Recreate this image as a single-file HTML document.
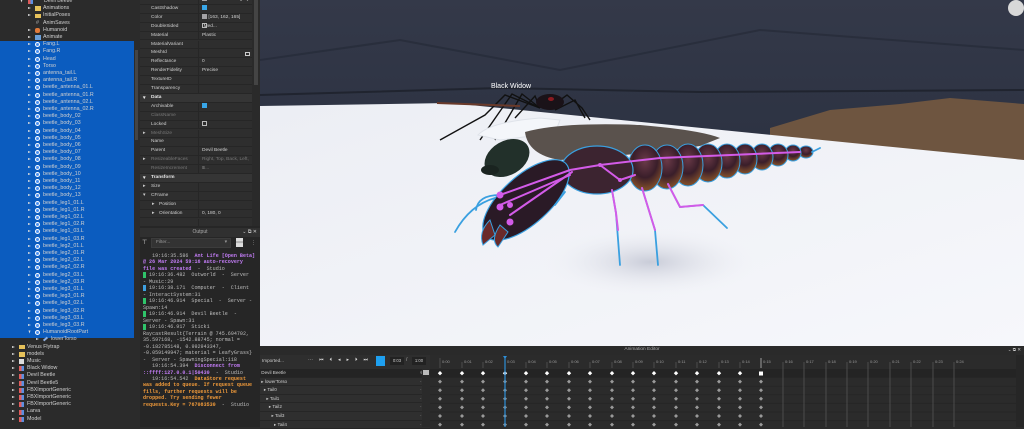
<!DOCTYPE html>
<html><head><meta charset="utf-8"><style>
*{margin:0;padding:0;box-sizing:border-box}
body{width:1024px;height:427px;overflow:hidden;background:#2b2b2b;font-family:"Liberation Sans",sans-serif;position:relative}
.abs{position:absolute}
#exp{left:0;top:0;width:140px;height:427px;background:#2b2b2b}
.r{position:absolute;height:7.2px;line-height:7.2px;font-size:5.3px;color:#d0d0d0;white-space:nowrap}
.r .a{position:absolute;top:2px;width:0;height:0;border-left:3px solid #ddd;border-top:1.6px solid transparent;border-bottom:1.6px solid transparent}
.r .i{position:absolute;top:1px;width:5px;height:5px;border-radius:50%;border:1px solid #fff;background:#4a8ff0}
.r .f{position:absolute;top:1.2px;width:6px;height:4.6px;background:#e6c15a}
.r .m{position:absolute;top:1.2px;width:5px;height:5px;background:linear-gradient(90deg,#e05c5c 50%,#5c8fe0 50%)}
#sel{left:0;top:41px;width:134px;height:297px;background:#0b5cbf}
#props{left:140px;top:0;width:120px;height:226px;background:#2e2e2e}
.p{position:absolute;left:0;width:112px;height:8.9px;border-bottom:1px solid #262626;font-size:4.8px;line-height:8.9px;color:#cfcfcf}
.p .l{position:absolute;left:11px}
.p .v{position:absolute;left:58px;border-left:1px solid #262626;padding-left:3px;height:8.9px}
.p.d{color:#777}
.p.h{background:#353535;font-weight:bold;color:#e8e8e8}
.cb{display:inline-block;width:5px;height:5px;background:#38a6e8;vertical-align:middle}
.cbx{display:inline-block;width:5px;height:5px;border:1px solid #bbb;vertical-align:middle}
#out{left:140px;top:226px;width:120px;height:201px;background:#262626;overflow:hidden}
#outtxt{position:absolute;left:3px;top:27px;width:116px;font-family:"Liberation Mono",monospace;font-size:5.05px;line-height:6.45px;color:#bdbdbd;white-space:pre}
.pu{color:#c27cf5;font-weight:bold}.or{color:#f09a3a;font-weight:bold}
.g{display:inline-block;width:3px;height:5.5px;background:#2fc46a;vertical-align:middle}
.b{display:inline-block;width:3px;height:5.5px;background:#3ea0e0;vertical-align:middle}
#anim{left:260px;top:346px;width:764px;height:81px;background:#2a2a2a}
.ar{position:absolute;left:0;width:170px;height:8.6px;font-size:4.6px;line-height:8.6px;color:#cfcfcf;border-bottom:1px solid #262626;background:#2f2f2f}
</style></head><body>

<div id="exp" class="abs">
<div id="sel" class="abs"></div>
<div class="abs" style="left:134px;top:0;width:6px;height:427px;background:#2b2b2b"></div>
<div class="abs" style="left:135px;top:50px;width:3px;height:90px;background:#444"></div>

<div class="r" style="top:-2px;left:20px"><span class="a" style="transform:rotate(90deg)"></span><span class="m" style="left:8px"></span><span style="position:absolute;left:24px">Devil Beetle</span></div>
<div class="r" style="top:5.2px;left:28px"><span class="a"></span><span class="f" style="left:7px"></span><span style="position:absolute;left:15px">Animations</span></div>
<div class="r" style="top:12.4px;left:28px"><span class="a"></span><span class="f" style="left:7px"></span><span style="position:absolute;left:15px">InitialPoses</span></div>
<div class="r" style="top:19.6px;left:28px"><span style="position:absolute;left:8px;color:#aaa">#</span><span style="position:absolute;left:15px">AnimSaves</span></div>
<div class="r" style="top:26.8px;left:28px"><span class="a"></span><span class="f" style="left:7px;background:#e07a3a;border-radius:2px;width:5px"></span><span style="position:absolute;left:15px">Humanoid</span></div>
<div class="r" style="top:34px;left:28px"><span class="a"></span><span class="f" style="left:7px;background:#6a9ed8"></span><span style="position:absolute;left:15px">Animate</span></div>
<div class="r" style="top:41.2px;left:28px"><span class="a"></span><span class="i" style="left:7px"></span><span style="position:absolute;left:15px">Fang.L</span></div>
<div class="r" style="top:48.4px;left:28px"><span class="a"></span><span class="i" style="left:7px"></span><span style="position:absolute;left:15px">Fang.R</span></div>
<div class="r" style="top:55.6px;left:28px"><span class="a"></span><span class="i" style="left:7px"></span><span style="position:absolute;left:15px">Head</span></div>
<div class="r" style="top:62.8px;left:28px"><span class="a"></span><span class="i" style="left:7px"></span><span style="position:absolute;left:15px">Torso</span></div>
<div class="r" style="top:70px;left:28px"><span class="a"></span><span class="i" style="left:7px"></span><span style="position:absolute;left:15px">antenna_tail.L</span></div>
<div class="r" style="top:77.2px;left:28px"><span class="a"></span><span class="i" style="left:7px"></span><span style="position:absolute;left:15px">antenna_tail.R</span></div>
<div class="r" style="top:84.4px;left:28px"><span class="a"></span><span class="i" style="left:7px"></span><span style="position:absolute;left:15px">beetle_antenna_01.L</span></div>
<div class="r" style="top:91.6px;left:28px"><span class="a"></span><span class="i" style="left:7px"></span><span style="position:absolute;left:15px">beetle_antenna_01.R</span></div>
<div class="r" style="top:98.8px;left:28px"><span class="a"></span><span class="i" style="left:7px"></span><span style="position:absolute;left:15px">beetle_antenna_02.L</span></div>
<div class="r" style="top:106px;left:28px"><span class="a"></span><span class="i" style="left:7px"></span><span style="position:absolute;left:15px">beetle_antenna_02.R</span></div>
<div class="r" style="top:113.2px;left:28px"><span class="a"></span><span class="i" style="left:7px"></span><span style="position:absolute;left:15px">beetle_body_02</span></div>
<div class="r" style="top:120.4px;left:28px"><span class="a"></span><span class="i" style="left:7px"></span><span style="position:absolute;left:15px">beetle_body_03</span></div>
<div class="r" style="top:127.6px;left:28px"><span class="a"></span><span class="i" style="left:7px"></span><span style="position:absolute;left:15px">beetle_body_04</span></div>
<div class="r" style="top:134.8px;left:28px"><span class="a"></span><span class="i" style="left:7px"></span><span style="position:absolute;left:15px">beetle_body_05</span></div>
<div class="r" style="top:142px;left:28px"><span class="a"></span><span class="i" style="left:7px"></span><span style="position:absolute;left:15px">beetle_body_06</span></div>
<div class="r" style="top:149.2px;left:28px"><span class="a"></span><span class="i" style="left:7px"></span><span style="position:absolute;left:15px">beetle_body_07</span></div>
<div class="r" style="top:156.4px;left:28px"><span class="a"></span><span class="i" style="left:7px"></span><span style="position:absolute;left:15px">beetle_body_08</span></div>
<div class="r" style="top:163.6px;left:28px"><span class="a"></span><span class="i" style="left:7px"></span><span style="position:absolute;left:15px">beetle_body_09</span></div>
<div class="r" style="top:170.8px;left:28px"><span class="a"></span><span class="i" style="left:7px"></span><span style="position:absolute;left:15px">beetle_body_10</span></div>
<div class="r" style="top:178px;left:28px"><span class="a"></span><span class="i" style="left:7px"></span><span style="position:absolute;left:15px">beetle_body_11</span></div>
<div class="r" style="top:185.2px;left:28px"><span class="a"></span><span class="i" style="left:7px"></span><span style="position:absolute;left:15px">beetle_body_12</span></div>
<div class="r" style="top:192.4px;left:28px"><span class="a"></span><span class="i" style="left:7px"></span><span style="position:absolute;left:15px">beetle_body_13</span></div>
<div class="r" style="top:199.6px;left:28px"><span class="a"></span><span class="i" style="left:7px"></span><span style="position:absolute;left:15px">beetle_leg1_01.L</span></div>
<div class="r" style="top:206.8px;left:28px"><span class="a"></span><span class="i" style="left:7px"></span><span style="position:absolute;left:15px">beetle_leg1_01.R</span></div>
<div class="r" style="top:214px;left:28px"><span class="a"></span><span class="i" style="left:7px"></span><span style="position:absolute;left:15px">beetle_leg1_02.L</span></div>
<div class="r" style="top:221.2px;left:28px"><span class="a"></span><span class="i" style="left:7px"></span><span style="position:absolute;left:15px">beetle_leg1_02.R</span></div>
<div class="r" style="top:228.4px;left:28px"><span class="a"></span><span class="i" style="left:7px"></span><span style="position:absolute;left:15px">beetle_leg1_03.L</span></div>
<div class="r" style="top:235.6px;left:28px"><span class="a"></span><span class="i" style="left:7px"></span><span style="position:absolute;left:15px">beetle_leg1_03.R</span></div>
<div class="r" style="top:242.8px;left:28px"><span class="a"></span><span class="i" style="left:7px"></span><span style="position:absolute;left:15px">beetle_leg2_01.L</span></div>
<div class="r" style="top:250px;left:28px"><span class="a"></span><span class="i" style="left:7px"></span><span style="position:absolute;left:15px">beetle_leg2_01.R</span></div>
<div class="r" style="top:257.2px;left:28px"><span class="a"></span><span class="i" style="left:7px"></span><span style="position:absolute;left:15px">beetle_leg2_02.L</span></div>
<div class="r" style="top:264.4px;left:28px"><span class="a"></span><span class="i" style="left:7px"></span><span style="position:absolute;left:15px">beetle_leg2_02.R</span></div>
<div class="r" style="top:271.6px;left:28px"><span class="a"></span><span class="i" style="left:7px"></span><span style="position:absolute;left:15px">beetle_leg2_03.L</span></div>
<div class="r" style="top:278.8px;left:28px"><span class="a"></span><span class="i" style="left:7px"></span><span style="position:absolute;left:15px">beetle_leg2_03.R</span></div>
<div class="r" style="top:286px;left:28px"><span class="a"></span><span class="i" style="left:7px"></span><span style="position:absolute;left:15px">beetle_leg3_01.L</span></div>
<div class="r" style="top:293.2px;left:28px"><span class="a"></span><span class="i" style="left:7px"></span><span style="position:absolute;left:15px">beetle_leg3_01.R</span></div>
<div class="r" style="top:300.4px;left:28px"><span class="a"></span><span class="i" style="left:7px"></span><span style="position:absolute;left:15px">beetle_leg3_02.L</span></div>
<div class="r" style="top:307.6px;left:28px"><span class="a"></span><span class="i" style="left:7px"></span><span style="position:absolute;left:15px">beetle_leg3_02.R</span></div>
<div class="r" style="top:314.8px;left:28px"><span class="a"></span><span class="i" style="left:7px"></span><span style="position:absolute;left:15px">beetle_leg3_03.L</span></div>
<div class="r" style="top:322px;left:28px"><span class="a"></span><span class="i" style="left:7px"></span><span style="position:absolute;left:15px">beetle_leg3_03.R</span></div>
<div class="r" style="top:329.2px;left:28px"><span class="a" style="transform:rotate(90deg)"></span><span class="i" style="left:7px"></span><span style="position:absolute;left:15px">HumanoidRootPart</span></div>
<div class="r" style="top:336.4px;left:36px"><span class="a"></span><span style="position:absolute;left:7px;top:2px;width:5px;height:2px;background:#8fb0e0;transform:rotate(-40deg)"></span><span style="position:absolute;left:15px">lowerTorso</span></div>
<div class="r" style="top:343.6px;left:12px"><span class="a"></span><span class="f" style="left:7px"></span><span style="position:absolute;left:15px">Venus Flytrap</span></div>
<div class="r" style="top:350.8px;left:12px"><span class="a"></span><span class="f" style="left:7px"></span><span style="position:absolute;left:15px">models</span></div>
<div class="r" style="top:358px;left:12px"><span class="a"></span><span class="f" style="left:7px;background:#ddd;width:5px"></span><span style="position:absolute;left:15px">Music</span></div>
<div class="r" style="top:365.2px;left:12px"><span class="a"></span><span class="m" style="left:7px"></span><span style="position:absolute;left:15px">Black Widow</span></div>
<div class="r" style="top:372.4px;left:12px"><span class="a"></span><span class="m" style="left:7px"></span><span style="position:absolute;left:15px">Devil Beetle</span></div>
<div class="r" style="top:379.6px;left:12px"><span class="a"></span><span class="m" style="left:7px"></span><span style="position:absolute;left:15px">Devil Beetle5</span></div>
<div class="r" style="top:386.8px;left:12px"><span class="a"></span><span class="m" style="left:7px"></span><span style="position:absolute;left:15px">FBXImportGeneric</span></div>
<div class="r" style="top:394px;left:12px"><span class="a"></span><span class="m" style="left:7px"></span><span style="position:absolute;left:15px">FBXImportGeneric</span></div>
<div class="r" style="top:401.2px;left:12px"><span class="a"></span><span class="m" style="left:7px"></span><span style="position:absolute;left:15px">FBXImportGeneric</span></div>
<div class="r" style="top:408.4px;left:12px"><span class="a"></span><span class="m" style="left:7px"></span><span style="position:absolute;left:15px">Larva</span></div>
<div class="r" style="top:415.6px;left:12px"><span class="a"></span><span class="m" style="left:7px"></span><span style="position:absolute;left:15px">Model</span></div>
</div>

<div id="props" class="abs">
<div class="abs" style="left:112px;top:0;width:8px;height:226px;background:#2a2a2a"></div>
<div class="abs" style="left:114px;top:0;width:4px;height:85px;background:#444"></div>
<div class="p" style="top:-4px"><span class="l">BrickColor</span><span class="v"><span class="cbx" style="background:#a3a2a5;border:0"></span> Medium stone grey</span></div>
<div class="p" style="top:4.9px"><span class="l">CastShadow</span><span class="v"><span class="cb"></span></span></div>
<div class="p" style="top:13.8px"><span class="l">Color</span><span class="v"><span class="cbx" style="background:#a3a2a5;border:0"></span> [163, 162, 165] (Med...</span></div>
<div class="p" style="top:22.7px"><span class="l">DoubleSided</span><span class="v"><span class="cbx"></span></span></div>
<div class="p" style="top:31.6px"><span class="l">Material</span><span class="v">Plastic</span></div>
<div class="p" style="top:40.5px"><span class="l">MaterialVariant</span><span class="v"></span></div>
<div class="p" style="top:49.4px"><span class="l">MeshId</span><span class="v" style="width:54px"><span style="position:absolute;right:2px;top:3px;width:5px;height:3.5px;border:1px solid #ccc"></span></span></div>
<div class="p" style="top:58.3px"><span class="l">Reflectance</span><span class="v">0</span></div>
<div class="p" style="top:67.2px"><span class="l">RenderFidelity</span><span class="v">Precise</span></div>
<div class="p" style="top:76.1px"><span class="l">TextureID</span><span class="v"></span></div>
<div class="p" style="top:85px"><span class="l">Transparency</span><span class="v"></span></div>
<div class="p h" style="top:93.9px"><span style="position:absolute;left:3px;top:1px">▾</span><span class="l">Data</span></div>
<div class="p" style="top:102.8px"><span class="l">Archivable</span><span class="v"><span class="cb"></span></span></div>
<div class="p d" style="top:111.7px"><span class="l">ClassName</span><span class="v"></span></div>
<div class="p" style="top:120.6px"><span class="l">Locked</span><span class="v"><span class="cbx"></span></span></div>
<div class="p d" style="top:129.5px"><span style="position:absolute;left:3px;color:#ccc">▸</span><span class="l">MeshSize</span><span class="v"></span></div>
<div class="p" style="top:138.4px"><span class="l">Name</span><span class="v"></span></div>
<div class="p" style="top:147.3px"><span class="l">Parent</span><span class="v">Devil Beetle</span></div>
<div class="p d" style="top:156.2px"><span style="position:absolute;left:3px;color:#ccc">▸</span><span class="l">ResizeableFaces</span><span class="v">Right, Top, Back, Left, B...</span></div>
<div class="p d" style="top:165.1px"><span class="l">ResizeIncrement</span><span class="v">1</span></div>
<div class="p h" style="top:174px"><span style="position:absolute;left:3px;top:1px">▾</span><span class="l">Transform</span></div>
<div class="p" style="top:182.9px"><span style="position:absolute;left:3px">▸</span><span class="l">Size</span><span class="v"></span></div>
<div class="p" style="top:191.8px"><span style="position:absolute;left:3px">▾</span><span class="l">CFrame</span><span class="v"></span></div>
<div class="p" style="top:200.7px"><span style="position:absolute;left:12px">▸</span><span class="l" style="left:19px">Position</span><span class="v"></span></div>
<div class="p" style="top:209.6px"><span style="position:absolute;left:12px">▸</span><span class="l" style="left:19px">Orientation</span><span class="v">0, 180, 0</span></div>
<div class="p" style="top:218.5px"><span class="l"></span><span class="v"></span></div>
</div>

<div id="out" class="abs">
<div class="abs" style="left:0;top:2px;width:120px;height:9px;background:#303030;font-size:5px;line-height:9px;color:#aaa;text-align:center">Output</div>
<div class="abs" style="right:3px;top:3px;font-size:5px;color:#ccc">⌄ ⧉ ✕</div>
<div class="abs" style="left:2px;top:14px;width:6px;height:6px;font-size:6px;color:#ddd;line-height:6px">⊤</div>
<div class="abs" style="left:11px;top:12px;width:80px;height:10px;background:#333;border:1px solid #3c3c3c;font-size:4.8px;line-height:8px;color:#999;padding-left:4px">Filter...<span style="position:absolute;right:3px">▾</span></div>
<div class="abs" style="left:96px;top:12px;width:7px;height:9px;background:linear-gradient(#ddd 40%,#888 40%,#ddd 60%)"></div>
<div class="abs" style="left:111px;top:14px;font-size:5px;color:#ccc">⋮</div>
<div id="outtxt">   19:16:35.586  <span class="pu">Ant Life [Open Beta]</span>
<span class="pu">@ 26 Mar 2024 59:16 auto-recovery</span>
<span class="pu">file was created</span>  -  Studio
<span class="g"></span> 19:16:36.482  Outworld  -  Server
- Music:29
<span class="b"></span> 19:16:38.171  Computer  -  Client
- InteractSystem:31
<span class="g"></span> 19:16:46.914  Special  -  Server -
Spawn:14
<span class="g"></span> 19:16:46.914  Devil Beetle  -
Server - Spawn:31
<span class="g"></span> 19:16:46.917  Stick1
RaycastResult{Terrain @ 745.694702,
35.597168, -1542.88745; normal =
-0.182785148, 0.992943347,
-0.059149947; material = LeafyGrass}
-  Server - SpawningSpecial:118
   19:16:54.394  <span class="pu">Disconnect from</span>
<span class="pu">::ffff:127.0.0.1|50430</span>  -  Studio
   19:16:54.542  <span class="or">DataStore request</span>
<span class="or">was added to queue. If request queue</span>
<span class="or">fills, further requests will be</span>
<span class="or">dropped. Try sending fewer</span>
<span class="or">requests.Key = 767083530</span>  -  Studio</div>
</div>

<svg class="abs" style="left:260px;top:0" width="764" height="346" viewBox="260 0 764 346">
<defs>
<linearGradient id="sky" x1="0" y1="0" x2="0" y2="1"><stop offset="0" stop-color="#343949"/><stop offset="0.5" stop-color="#2b3141"/><stop offset="1" stop-color="#252b39"/></linearGradient>
<linearGradient id="floor" x1="0" y1="0" x2="1" y2="1"><stop offset="0" stop-color="#eceef4"/><stop offset="1" stop-color="#f6f7fb"/></linearGradient>
<radialGradient id="sh" cx="0.5" cy="0.5" r="0.5"><stop offset="0" stop-color="#c9ccd8"/><stop offset="1" stop-color="#f1f2f7" stop-opacity="0"/></radialGradient>
<radialGradient id="seg" cx="0.5" cy="0.35" r="0.6"><stop offset="0" stop-color="#6a3a48"/><stop offset="0.6" stop-color="#3a1e2a"/><stop offset="1" stop-color="#7a4a2a"/></radialGradient>
</defs>
<rect x="260" y="0" width="764" height="346" fill="url(#sky)"/>
<path d="M260 60 L400 40 L560 70 L760 30 L1024 50" stroke="#232836" stroke-width="2" fill="none" opacity=".6"/>
<path d="M260 95 L500 88 L700 92 L1024 90" stroke="#20242f" stroke-width="2" fill="none"/>
<path d="M770 128 L830 110 L900 104 L950 98 L1024 104 L1024 162 L770 135 Z" fill="#6e5540"/>
<path d="M260 106 L450 103 L1024 160 L1024 346 L260 346 Z" fill="url(#floor)"/>
<ellipse cx="650" cy="262" rx="110" ry="35" fill="url(#sh)"/>
<ellipse cx="1016" cy="8" rx="8" ry="8" fill="#d8d8d8"/>
<text x="511" y="88" font-size="7" fill="#fff" text-anchor="middle" font-family="Liberation Sans">Black Widow</text>
<g stroke="#111" stroke-width="1.4" fill="none">
<path d="M540 108 L505 95 L485 115 L440 140"/><path d="M540 108 L512 94 L480 140"/>
<path d="M540 108 L522 94 L495 140"/><path d="M540 108 L535 96 L515 118"/>
<path d="M552 106 L567 95 L582 108 L590 120"/><path d="M555 110 L575 100 L585 118"/>
<path d="M437 103 L520 106" stroke="#6a3a2a" stroke-width="2"/>
</g>
<ellipse cx="550" cy="102" rx="14" ry="8" fill="#1a1218"/><ellipse cx="551" cy="99" rx="3" ry="2" fill="#8a1a20"/>
<path d="M478 135 Q490 122 540 118 L560 120 L555 133 L500 140 Z" fill="#f4f6fa" stroke="#dfe3ea"/>
<path d="M525 132 Q560 122 640 125 Q700 130 720 138 L700 146 Q640 155 560 160 Q528 155 525 132 Z" fill="#5a524d"/>
<ellipse cx="507" cy="158" rx="24" ry="17" fill="#22302a" transform="rotate(-30 507 158)"/>
<ellipse cx="490" cy="170" rx="9" ry="5" fill="#1a2420"/>
<g fill="url(#seg)" stroke="#3aa0e0" stroke-width="1">
<ellipse cx="806" cy="152" rx="7" ry="6"/>
<ellipse cx="793" cy="153" rx="8" ry="8"/>
<ellipse cx="778" cy="155" rx="10" ry="11"/>
<ellipse cx="762" cy="157" rx="11" ry="13"/>
<ellipse cx="745" cy="159" rx="12" ry="15"/>
<ellipse cx="727" cy="161" rx="13" ry="17"/>
<ellipse cx="708" cy="163" rx="14" ry="19"/>
<ellipse cx="688" cy="165" rx="15" ry="21"/>
<ellipse cx="667" cy="167" rx="16" ry="22"/>
<ellipse cx="645" cy="168" rx="17" ry="23"/>
</g>
<ellipse cx="597" cy="170" rx="36" ry="24" fill="#3c2430" stroke="#3aa0e0" stroke-width="1.2"/>
<ellipse cx="526" cy="200" rx="54" ry="24" fill="#2a1a26" stroke="#3aa0e0" stroke-width="1.2" transform="rotate(-42 526 200)"/>
<path d="M490 220 Q478 232 483 245 L495 235 Z" fill="#6a2a2a" stroke="#3aa0e0"/>
<path d="M500 225 Q490 240 498 247 L508 232 Z" fill="#6a2a2a" stroke="#3aa0e0"/>
<g stroke="#3aa0e0" stroke-width="1.8" fill="none" stroke-linecap="round">
<path d="M495 198 Q470 205 455 232"/><path d="M500 195 Q478 195 476 210"/>
<path d="M612 190 L616 213 L620 265"/><path d="M642 188 L655 230 L658 265"/>
<path d="M668 184 L680 207 L703 205 L727 228"/><path d="M565 192 L555 205"/>
<path d="M812 152 L820 148"/></g>
<g stroke="#d35be8" stroke-width="2" fill="none" stroke-linecap="round">
<path d="M500 195 L570 170 L600 165 L660 158 L800 152"/><path d="M500 205 L570 175"/><path d="M510 215 L572 172"/>
<path d="M612 190 L616 213 L618 230"/><path d="M642 188 L655 230"/><path d="M668 184 L680 207 L703 205"/>
<path d="M600 165 L620 180 L635 175"/></g>
<g fill="#d35be8"><circle cx="500" cy="195" r="3.5"/><circle cx="500" cy="207" r="3.5"/><circle cx="510" cy="205" r="3"/><circle cx="510" cy="222" r="3.5"/><circle cx="600" cy="165" r="2"/><circle cx="620" cy="180" r="2"/></g>
</svg>

<div id="anim" class="abs">
<div class="abs" style="left:0;top:0;width:764px;height:8px;background:#2a2a2a;font-size:4.8px;line-height:8px;color:#aaa;text-align:center">Animation Editor</div>
<div class="abs" style="right:3px;top:1px;font-size:4.5px;color:#ccc">⌄ ⧉ ✕</div>
<div class="abs" style="left:0;top:9px;width:764px;height:14px;background:#2e2e2e"></div>
<div class="abs" style="left:2px;top:12px;font-size:4.6px;color:#ccc">Imported...</div>
<div class="abs" style="left:48px;top:11px;font-size:5px;color:#ddd;letter-spacing:2.3px">⋯ ⏮ ⏴ ◂ ▸ ⏵ ⏭</div>
<div class="abs" style="left:116px;top:10px;width:9px;height:10px;background:#1ea0f0"></div>
<div class="abs" style="left:130px;top:11px;width:14px;height:8px;background:#222;font-size:4.3px;line-height:8px;color:#ccc;text-align:center">0:03</div>
<div class="abs" style="left:146px;top:11px;font-size:5px;color:#aaa">/</div>
<div class="abs" style="left:152px;top:11px;width:14px;height:8px;background:#222;font-size:4.3px;line-height:8px;color:#ccc;text-align:center">1:00</div>
<div class="ar" style="top:23px;background:#242424">&nbsp;Devil Beetle</div>
<div class="ar" style="top:31.6px">&nbsp;▸ lowerTorso</div>
<div class="ar" style="top:40.2px">&nbsp;&nbsp;&nbsp;▸ Tail0</div>
<div class="ar" style="top:48.8px">&nbsp;&nbsp;&nbsp;&nbsp;&nbsp;▸ Tail1</div>
<div class="ar" style="top:57.4px">&nbsp;&nbsp;&nbsp;&nbsp;&nbsp;&nbsp;&nbsp;▸ Tail2</div>
<div class="ar" style="top:66px">&nbsp;&nbsp;&nbsp;&nbsp;&nbsp;&nbsp;&nbsp;&nbsp;&nbsp;▸ Tail3</div>
<div class="ar" style="top:74.6px">&nbsp;&nbsp;&nbsp;&nbsp;&nbsp;&nbsp;&nbsp;&nbsp;&nbsp;&nbsp;&nbsp;▸ Tail4</div>
<div class="abs" style="left:160px;top:23px;width:10px;height:58px;font-size:5px;color:#aaa;line-height:8.6px">⊕<br>⋯<br>⋯<br>⋯<br>⋯<br>⋯<br>⋯</div>
<div class="abs" style="left:162px;top:23px;width:8px;height:58px;background:#2a2a2a"></div>
<div class="abs" style="left:163px;top:24px;width:6px;height:5px;background:#bbb"></div>
<svg class="abs" style="left:170px;top:9px" width="594" height="72" viewBox="430 355 594 72">
<rect x="430" y="355" width="594" height="72" fill="#2b2b2b"/>
<rect x="430" y="369" width="586" height="8.6" fill="#242424"/>
<g stroke="#262626"><line x1="430" y1="386.2" x2="1016" y2="386.2"/><line x1="430" y1="394.8" x2="1016" y2="394.8"/><line x1="430" y1="403.4" x2="1016" y2="403.4"/><line x1="430" y1="412" x2="1016" y2="412"/><line x1="430" y1="420.6" x2="1016" y2="420.6"/></g>
<g stroke="#555" stroke-width="0.8" font-size="4" fill="#999" font-family="Liberation Sans">
<line x1="440" y1="358" x2="440" y2="368"/><text x="442" y="363" stroke="none">0:00</text>
<line x1="462" y1="362" x2="462" y2="368"/><text x="464" y="363" stroke="none">0:01</text>
<line x1="483" y1="362" x2="483" y2="368"/><text x="485" y="363" stroke="none">0:02</text>
<line x1="505" y1="362" x2="505" y2="368"/><text x="507" y="363" stroke="none">0:03</text>
<line x1="526" y1="362" x2="526" y2="368"/><text x="528" y="363" stroke="none">0:04</text>
<line x1="547" y1="362" x2="547" y2="368"/><text x="549" y="363" stroke="none">0:05</text>
<line x1="569" y1="362" x2="569" y2="368"/><text x="571" y="363" stroke="none">0:06</text>
<line x1="590" y1="362" x2="590" y2="368"/><text x="592" y="363" stroke="none">0:07</text>
<line x1="612" y1="362" x2="612" y2="368"/><text x="614" y="363" stroke="none">0:08</text>
<line x1="633" y1="362" x2="633" y2="368"/><text x="635" y="363" stroke="none">0:09</text>
<line x1="654" y1="362" x2="654" y2="368"/><text x="656" y="363" stroke="none">0:10</text>
<line x1="676" y1="362" x2="676" y2="368"/><text x="678" y="363" stroke="none">0:11</text>
<line x1="697" y1="362" x2="697" y2="368"/><text x="699" y="363" stroke="none">0:12</text>
<line x1="719" y1="362" x2="719" y2="368"/><text x="721" y="363" stroke="none">0:13</text>
<line x1="740" y1="362" x2="740" y2="368"/><text x="742" y="363" stroke="none">0:14</text>
<line x1="761" y1="358" x2="761" y2="368" stroke="#bbb"/><text x="763" y="363" stroke="none">0:15</text>
<line x1="783" y1="362" x2="783" y2="427"/><text x="785" y="363" stroke="none">0:16</text>
<line x1="804" y1="362" x2="804" y2="427"/><text x="806" y="363" stroke="none">0:17</text>
<line x1="826" y1="362" x2="826" y2="427"/><text x="828" y="363" stroke="none">0:18</text>
<line x1="847" y1="362" x2="847" y2="427"/><text x="849" y="363" stroke="none">0:19</text>
<line x1="868" y1="362" x2="868" y2="427"/><text x="870" y="363" stroke="none">0:20</text>
<line x1="890" y1="362" x2="890" y2="427"/><text x="892" y="363" stroke="none">0:21</text>
<line x1="911" y1="362" x2="911" y2="427"/><text x="913" y="363" stroke="none">0:22</text>
<line x1="933" y1="362" x2="933" y2="427"/><text x="935" y="363" stroke="none">0:23</text>
<line x1="954" y1="362" x2="954" y2="427"/><text x="956" y="363" stroke="none">0:24</text>
</g>
<rect x="1016" y="355" width="8" height="72" fill="#262626"/>
<g fill="#fff">
<path d="M440 371 l2.2 2.2 -2.2 2.2 -2.2 -2.2z"/><path d="M462 371 l2.2 2.2 -2.2 2.2 -2.2 -2.2z"/><path d="M483 371 l2.2 2.2 -2.2 2.2 -2.2 -2.2z"/><path d="M505 371 l2.2 2.2 -2.2 2.2 -2.2 -2.2z"/><path d="M526 371 l2.2 2.2 -2.2 2.2 -2.2 -2.2z"/><path d="M547 371 l2.2 2.2 -2.2 2.2 -2.2 -2.2z"/><path d="M569 371 l2.2 2.2 -2.2 2.2 -2.2 -2.2z"/><path d="M590 371 l2.2 2.2 -2.2 2.2 -2.2 -2.2z"/><path d="M612 371 l2.2 2.2 -2.2 2.2 -2.2 -2.2z"/><path d="M633 371 l2.2 2.2 -2.2 2.2 -2.2 -2.2z"/><path d="M654 371 l2.2 2.2 -2.2 2.2 -2.2 -2.2z"/><path d="M676 371 l2.2 2.2 -2.2 2.2 -2.2 -2.2z"/><path d="M697 371 l2.2 2.2 -2.2 2.2 -2.2 -2.2z"/><path d="M719 371 l2.2 2.2 -2.2 2.2 -2.2 -2.2z"/><path d="M740 371 l2.2 2.2 -2.2 2.2 -2.2 -2.2z"/><rect x="759" y="371.5" width="4" height="4"/>
</g>
<g fill="#9a9a9a">
<path id="dr" d="M440 379.6 l2 2 -2 2 -2 -2z M462 379.6 l2 2 -2 2 -2 -2z M483 379.6 l2 2 -2 2 -2 -2z M505 379.6 l2 2 -2 2 -2 -2z M526 379.6 l2 2 -2 2 -2 -2z M547 379.6 l2 2 -2 2 -2 -2z M569 379.6 l2 2 -2 2 -2 -2z M590 379.6 l2 2 -2 2 -2 -2z M612 379.6 l2 2 -2 2 -2 -2z M633 379.6 l2 2 -2 2 -2 -2z M654 379.6 l2 2 -2 2 -2 -2z M676 379.6 l2 2 -2 2 -2 -2z M697 379.6 l2 2 -2 2 -2 -2z M719 379.6 l2 2 -2 2 -2 -2z M740 379.6 l2 2 -2 2 -2 -2z M761 379.6 l2 2 -2 2 -2 -2z"/>
<use href="#dr" y="8.6"/><use href="#dr" y="17.2"/><use href="#dr" y="25.8"/><use href="#dr" y="34.4"/><use href="#dr" y="43"/>
</g>
<line x1="505" y1="356" x2="505" y2="427" stroke="#2e8fd8" stroke-width="1.2"/>
<path d="M503 356 h4 l-2 3z" fill="#2e8fd8"/>
</svg>
</div>
</body></html>
